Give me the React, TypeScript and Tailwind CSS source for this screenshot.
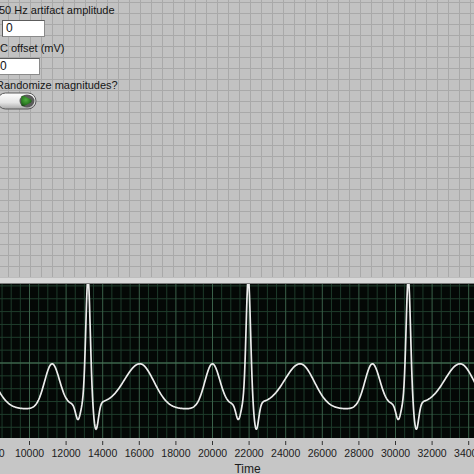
import React from "react";

const W = 474;
const H = 154;
const BASE = 125;
const RS = [88, 248.3, 408.3, -72, 568];

function g(x: number, c: number, s: number) {
  const d = x - c;
  return Math.exp(-(d * d) / (2 * s * s));
}

function yAt(x: number) {
  let v = 0;
  for (const r of RS) {
    v += 6 * g(x, r, 20);
    v += 44 * g(x, r - 36, 7.5);
    v += -16 * g(x, r - 10, 2.4);
    v += 125 * g(x, r, 2.2);
    v += -27 * g(x, r + 8, 2.4);
    const tc = r + 52;
    v += 45 * g(x, tc, x < tc ? 16 : 14);
  }
  return BASE - v;
}

function buildPath() {
  const pts: string[] = [];
  for (let x = -2; x <= W + 2; x += 0.5) {
    pts.push(`${x.toFixed(1)},${yAt(x).toFixed(2)}`);
  }
  return pts.join(" ");
}

const X0 = 29.5;
const MAJ = 36.6;

function Graph() {
  const minorV: number[] = [];
  const majorV: number[] = [];
  for (let k = -1; k <= 13; k++) {
    const x = X0 + k * MAJ;
    majorV.push(x);
    for (let j = 1; j < 4; j++) minorV.push(x + (j * MAJ) / 4);
  }
  const hLines: number[] = [];
  for (let k = -7; k <= 6; k++) hLines.push(79 + k * 12.85);
  const pts = buildPath();
  return (
    <svg width={W} height={H} viewBox={`0 0 ${W} ${H}`} className="block">
      <rect x="0" y="0" width={W} height={H} fill="#040806" />
      {minorV.map((x, i) => (
        <line key={"mv" + i} x1={x} x2={x} y1={0} y2={H} stroke="#1d3a2a" strokeWidth="1" />
      ))}
      {hLines.map((y, i) => (
        <line key={"h" + i} x1={0} x2={W} y1={y} y2={y} stroke="#1f3d2c" strokeWidth="1" />
      ))}
      {majorV.map((x, i) => (
        <line key={"Mv" + i} x1={x} x2={x} y1={0} y2={H} stroke="#3a6049" strokeWidth="1" />
      ))}
      <line x1={0} x2={W} y1={79} y2={79} stroke="#4d7a5c" strokeWidth="1" />
      <polyline points={pts} fill="none" stroke="#ececec" strokeWidth="1.7" strokeLinejoin="round" />
    </svg>
  );
}

function Axis() {
  const labels: { x: number; t: string }[] = [];
  for (let k = -1; k <= 12; k++) {
    labels.push({ x: X0 + k * MAJ, t: String(10000 + k * 2000) });
  }
  return (
    <svg width={W} height={36} viewBox={`0 0 ${W} 36`} className="block">
      {labels.map((l, i) => (
        <g key={i}>
          <line x1={l.x} x2={l.x} y1={3} y2={7} stroke="#333" strokeWidth="1" />
          <text
            x={l.x}
            y={19}
            textAnchor="middle"
            fontSize="10.5"
            fill="#1c1c1c"
            fontFamily="'Liberation Sans', Arial, sans-serif"
          >
            {l.t}
          </text>
        </g>
      ))}
      <text
        x={247.5}
        y={34.5}
        textAnchor="middle"
        fontSize="12"
        fill="#1c1c1c"
        fontFamily="'Liberation Sans', Arial, sans-serif"
      >
        Time
      </text>
    </svg>
  );
}

function Toggle() {
  return (
    <svg width="40" height="18" viewBox="0 0 40 18" className="block -ml-[3px]">
      <defs>
        <linearGradient id="pill" x1="0" y1="0" x2="0" y2="1">
          <stop offset="0" stopColor="#ffffff" />
          <stop offset="0.6" stopColor="#e4e4e4" />
          <stop offset="1" stopColor="#a8a8a8" />
        </linearGradient>
        <radialGradient id="led" cx="0.45" cy="0.4" r="0.6">
          <stop offset="0" stopColor="#4fae3e" />
          <stop offset="0.7" stopColor="#2a7a22" />
          <stop offset="1" stopColor="#1c4f18" />
        </radialGradient>
      </defs>
      <rect x="0.5" y="1" width="38.5" height="16" rx="8" fill="url(#pill)" stroke="#5a5a5a" strokeWidth="1" />
      <ellipse cx="30" cy="9" rx="7.5" ry="6.5" fill="#5b5b5b" />
      <path d="M24.5 4.5 Q25 3.5 27 4 L34 7.5 Q35.5 9 34 10.5 L27 14 Q25 14.5 24.5 13.5 Q23.5 9 24.5 4.5 Z" fill="url(#led)" />
    </svg>
  );
}

export default function App() {
  const font = { fontFamily: "'Liberation Sans', Arial, sans-serif" };
  return (
    <div className="w-[474px] h-[474px] overflow-hidden flex flex-col bg-[#c4c4c4]" style={font}>
      <div className="h-[277px] flex flex-col pt-[3px] bg-[#c2c2c2] bg-[linear-gradient(to_right,#a9a9a9_1px,transparent_1px),linear-gradient(to_bottom,#a9a9a9_1px,transparent_1px)] bg-[size:11px_11px] bg-[position:8px_2px]">
        <div className="h-[14px] leading-[14px] text-[11px] text-[#161616] -ml-[1px] whitespace-nowrap">50 Hz artifact amplitude</div>
        <div className="mt-[3px] ml-[2px] w-[43px] h-[17px] bg-white border border-[#8a8a8a] border-t-[#5c5c5c] border-l-[#5c5c5c] text-[12px] leading-[15px] pl-[3px] text-[#111]">0</div>
        <div className="mt-[4px] h-[14px] leading-[14px] text-[11px] text-[#161616] -ml-[8px] whitespace-nowrap">DC offset (mV)</div>
        <div className="mt-[3px] -ml-[4px] w-[44px] h-[17px] bg-white border border-[#8a8a8a] border-t-[#5c5c5c] border-l-[#5c5c5c] text-[12px] leading-[15px] pl-[3px] text-[#111]">0</div>
        <div className="mt-[3px] h-[14px] leading-[14px] text-[11px] text-[#161616] -ml-[4px] whitespace-nowrap">Randomize magnitudes?</div>
        <div className="mt-[0px]">
          <Toggle />
        </div>
      </div>
      <div className="h-[6px] bg-[#d8d8d8] border-t border-[#bdbdbd]" />
      <div className="h-[1px] bg-[#7c7c7c]" />
      <div className="h-[154px]">
        <Graph />
      </div>
      <div className="h-[36px] bg-[#c6c6c6]">
        <Axis />
      </div>
    </div>
  );
}
